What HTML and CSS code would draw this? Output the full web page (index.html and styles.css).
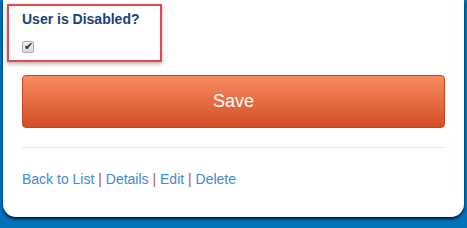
FILE: index.html
```html
<!DOCTYPE html>
<html lang="en">
<head>
  <meta charset="UTF-8">
  <title>Edit User</title>
  <link rel="stylesheet" href="styles.css">
</head>
<body>
  <div class="panel">
    <div class="prev-field"></div>

    <div class="field">
      <label class="field-label" for="disabled">User is Disabled?</label>
      <div class="check-row">
        <input type="checkbox" id="disabled" class="check" checked disabled>
      </div>
    </div>

    <div class="highlight"></div>

    <button class="save-btn">Save</button>

    <hr class="divider">

    <div class="links">
      <a href="#">Back to List</a> <span class="sep">|</span>
      <a href="#">Details</a> <span class="sep">|</span>
      <a href="#">Edit</a> <span class="sep">|</span>
      <a href="#">Delete</a>
    </div>
  </div>
</body>
</html>
```

FILE: styles.css
```css
body {
  margin: 0;
  font-family: "Liberation Sans", Arial, sans-serif;
  background-color: #0072bb;
  height: 228px;
  overflow: hidden;
}
.panel {
  position: relative;
  margin: 0 3px;
  padding: 0 19px 28px;
  background-color: white;
  border-radius: 0 0 13px 13px;
  box-shadow: 0 2px 3px rgba(0, 10, 40, 0.9);
}
.prev-field {
  height: 0;
  box-shadow: 0 1px 5px rgba(0, 0, 0, 0.14);
}
.field {
  padding-top: 9px;
}
.field-label {
  display: block;
  font-size: 14px;
  line-height: 20px;
  font-weight: bold;
  color: #173f7c;
}
.check-row {
  margin-top: 12px;
  height: 13px;
}
.check {
  appearance: none;
  -webkit-appearance: none;
  display: block;
  margin: 0;
  width: 12px;
  height: 12px;
  border: 1px solid #a8a8a8;
  border-radius: 2px;
  background: linear-gradient(#f2f2f2, #d8d8d8);
  position: relative;
}
.check:checked::before {
  content: "\2714";
  position: absolute;
  left: 1px;
  top: -2px;
  font-family: "DejaVu Sans", sans-serif;
  font-size: 11px;
  line-height: 14px;
  color: #333;
}
.highlight {
  position: absolute;
  left: 4px;
  top: 4px;
  width: 151px;
  height: 54px;
  border: 2px solid #e5474b;
  box-shadow: 0 2px 4px rgba(0, 0, 0, 0.3);
}
.save-btn {
  display: block;
  width: 100%;
  height: 53px;
  margin-top: 21px;
  border: 1px solid #c7461e;
  border-radius: 4px;
  background: linear-gradient(#f88b5f, #d44d25);
  color: white;
  font-family: "Liberation Sans", Arial, sans-serif;
  font-size: 18px;
  padding: 0;
}
.divider {
  margin: 19px 0 21px;
  border: none;
  border-top: 1px solid #e6e8ea;
}
.links {
  font-size: 14px;
  line-height: 20px;
  color: #b0602a;
}
.links a {
  color: #3b8bd5;
  text-decoration: none;
}
```
